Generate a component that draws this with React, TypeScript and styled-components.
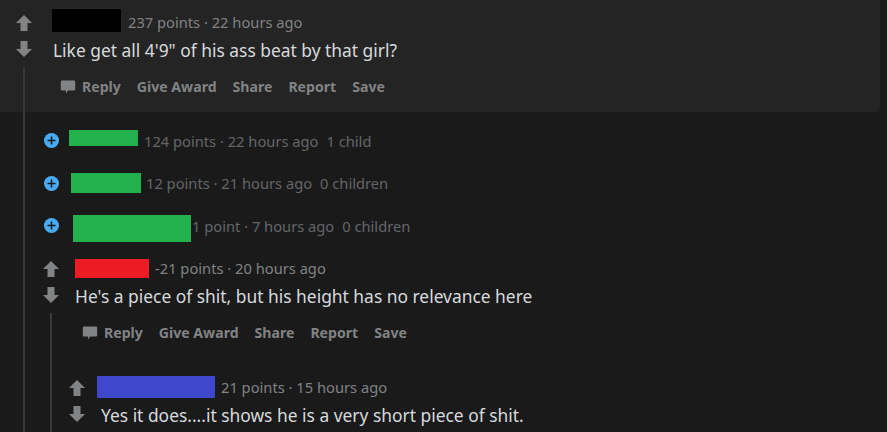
import React from "react";
import styled, { createGlobalStyle } from "styled-components";

const Global = createGlobalStyle`
  html, body { margin: 0; padding: 0; background: #1a1a1b; overflow: hidden; }
  body { font-family: "Noto Sans", "Open Sans", sans-serif; -webkit-font-smoothing: antialiased; }
`;

const Page = styled.div`
  width: 887px;
  height: 432px;
  overflow: hidden;
  background: #1a1a1b;
`;

const Block = styled.div`
  display: flex;
  flex-direction: column;
`;

const Main = styled.div<{ $pt: number; $highlight?: boolean }>`
  display: flex;
  align-items: stretch;
  padding-top: ${(p) => p.$pt}px;
  background: ${(p) => (p.$highlight ? "#242425" : "transparent")};
  width: ${(p) => (p.$highlight ? "880px" : "auto")};
  border-bottom-right-radius: ${(p) => (p.$highlight ? "5px" : "0")};
`;

const Gutter = styled.div`
  width: 48px;
  flex-shrink: 0;
  display: flex;
  flex-direction: column;
  align-items: center;
  padding-top: 3px;
  gap: 2px;
`;

const VoteButton = styled.div`
  width: 24px;
  height: 24px;
  display: flex;
  align-items: center;
  justify-content: center;
`;

const GutterLine = styled.div`
  width: 2px;
  flex: 1;
  margin-top: 4px;
  background: #38393a;
`;

const ExpandBox = styled.div`
  height: 28px;
  display: flex;
  align-items: center;
  justify-content: center;
  margin-top: -3px;
`;

const Content = styled.div<{ $inset: number; $pb: number }>`
  flex: 1;
  min-width: 0;
  padding-left: ${(p) => p.$inset}px;
  padding-bottom: ${(p) => p.$pb}px;
  display: flex;
  flex-direction: column;
`;

const Header = styled.div`
  height: 28px;
  display: flex;
  align-items: center;
  white-space: nowrap;
`;

const Redact = styled.span<{ $color: string; $w: number; $h: number; $top: number; $left: number; $gap: number }>`
  display: block;
  flex-shrink: 0;
  align-self: flex-start;
  width: ${(p) => p.$w}px;
  height: ${(p) => p.$h}px;
  margin-top: ${(p) => p.$top}px;
  margin-left: ${(p) => p.$left}px;
  margin-right: ${(p) => p.$gap}px;
  background: ${(p) => p.$color};
`;

const Meta = styled.span<{ $dim?: boolean }>`
  font-size: 14.7px;
  color: ${(p) => (p.$dim ? "#646668" : "#818384")};
`;

const Children = styled.span`
  margin-left: 8px;
`;

const Body = styled.p`
  margin: 0;
  height: 28px;
  line-height: 28px;
  font-size: 17.4px;
  color: #d7dadc;
  white-space: nowrap;
`;

const Actions = styled.div`
  display: flex;
  height: 32px;
  margin-top: 6px;
  margin-left: -1px;
  align-items: center;
`;

const ActionButton = styled.span`
  display: flex;
  align-items: center;
  padding: 0 8px;
  font-size: 14.1px;
  font-weight: 700;
  color: #818384;
  white-space: nowrap;
`;

const ReplyIcon = styled.svg`
  width: 16px;
  height: 16px;
  margin-right: 6px;
  margin-top: 2px;
`;

const Replies = styled.div`
  display: flex;
  align-items: stretch;
`;

const Rail = styled.div<{ $w: number }>`
  width: ${(p) => p.$w}px;
  flex-shrink: 0;
  display: flex;
  padding-left: 23px;
  box-sizing: border-box;
`;

const RailLine = styled.div`
  width: 2px;
  background: #38393a;
`;

const ReplyList = styled.div`
  flex: 1;
  display: flex;
  flex-direction: column;
`;

const UpArrow = () => (
  <svg width="16" height="16" viewBox="0 0 16 16">
    <path d="M8 0 L16 8 H11.5 V16 H4.5 V8 H0 Z" fill="#818384" />
  </svg>
);

const DownArrow = () => (
  <svg width="16" height="16" viewBox="0 0 16 16">
    <path d="M8 16 L16 8 H11.5 V0 H4.5 V8 H0 Z" fill="#818384" />
  </svg>
);

const PlusIcon = () => (
  <svg width="15" height="15" viewBox="0 0 15 15">
    <circle cx="7.5" cy="7.5" r="7.5" fill="#47abf5" />
    <path d="M7.5 3.5 V11.5 M3.5 7.5 H11.5" stroke="#1a1a1b" strokeWidth="1.6" />
  </svg>
);

type Redaction = { color: string; w: number; h: number; top: number; left: number; gap: number };

type CommentData = {
  id: string;
  redact: Redaction;
  meta: string;
  kids?: string;
  body?: string;
  collapsed?: boolean;
  rail?: number;
  replies?: CommentData[];
};

const ACTIONS = ["Give Award", "Share", "Report", "Save"];

const Comment: React.FC<{ c: CommentData; pt: number; highlight?: boolean; inset?: number }> = ({
  c,
  pt,
  highlight,
  inset = 0,
}) => (
  <Block>
    <Main $pt={pt} $highlight={highlight}>
      <Gutter>
        {c.collapsed ? (
          <ExpandBox>
            <PlusIcon />
          </ExpandBox>
        ) : (
          <>
            <VoteButton>
              <UpArrow />
            </VoteButton>
            <VoteButton>
              <DownArrow />
            </VoteButton>
            <GutterLine />
          </>
        )}
      </Gutter>
      <Content $inset={inset} $pb={c.collapsed ? 0 : 10}>
        <Header>
          <Redact
            $color={c.redact.color}
            $w={c.redact.w}
            $h={c.redact.h}
            $top={c.redact.top}
            $left={c.redact.left}
            $gap={c.redact.gap}
          />
          <Meta $dim={c.collapsed}>
            {c.meta}
            {c.kids && <Children>{c.kids}</Children>}
          </Meta>
        </Header>
        {!c.collapsed && (
          <>
            <Body>{c.body}</Body>
            <Actions>
              <ActionButton>
                <ReplyIcon viewBox="0 0 16 16">
                  <path
                    d="M2 1.5 H14 A1.2 1.2 0 0 1 15.2 2.7 V10.3 A1.2 1.2 0 0 1 14 11.5 H8 L6 14.5 V11.5 H2 A1.2 1.2 0 0 1 0.8 10.3 V2.7 A1.2 1.2 0 0 1 2 1.5 Z"
                    fill="#818384"
                  />
                </ReplyIcon>
                Reply
              </ActionButton>
              {ACTIONS.map((a) => (
                <ActionButton key={a}>{a}</ActionButton>
              ))}
            </Actions>
          </>
        )}
      </Content>
    </Main>
    {c.replies && c.replies.length > 0 && (
      <Replies>
        <Rail $w={c.rail ?? 27}>
          <RailLine />
        </Rail>
        <ReplyList>
          {c.replies.map((r) => (
            <Comment key={r.id} c={r} pt={14.5} />
          ))}
        </ReplyList>
      </Replies>
    )}
  </Block>
);

const thread: CommentData = {
  id: "root",
  redact: { color: "#000000", w: 69, h: 23, top: 1, left: -1, gap: 7 },
  meta: "237 points · 22 hours ago",
  body: "Like get all 4'9\" of his ass beat by that girl?",
  rail: 27,
  replies: [
    {
      id: "c1",
      collapsed: true,
      redact: { color: "#22b14c", w: 69, h: 16, top: 3, left: -6, gap: 6 },
      meta: "124 points · 22 hours ago",
      kids: "1 child",
    },
    {
      id: "c2",
      collapsed: true,
      redact: { color: "#22b14c", w: 70, h: 20, top: 4, left: -4, gap: 5 },
      meta: "12 points · 21 hours ago",
      kids: "0 children",
    },
    {
      id: "c3",
      collapsed: true,
      redact: { color: "#22b14c", w: 118, h: 27, top: 3, left: -2, gap: 1 },
      meta: "1 point · 7 hours ago",
      kids: "0 children",
    },
    {
      id: "c4",
      redact: { color: "#ed1c24", w: 74, h: 19, top: 5, left: 0, gap: 6 },
      meta: "-21 points · 20 hours ago",
      body: "He's a piece of shit, but his height has no relevance here",
      rail: 26,
      replies: [
        {
          id: "c5",
          redact: { color: "#3f48cc", w: 118, h: 22, top: 3, left: -4, gap: 6 },
          meta: "21 points · 15 hours ago",
          body: "Yes it does....it shows he is a very short piece of shit.",
        },
      ],
    },
  ],
};

export default function App() {
  return (
    <>
      <Global />
      <Page>
        <Comment c={thread} pt={8} highlight inset={5} />
      </Page>
    </>
  );
}
